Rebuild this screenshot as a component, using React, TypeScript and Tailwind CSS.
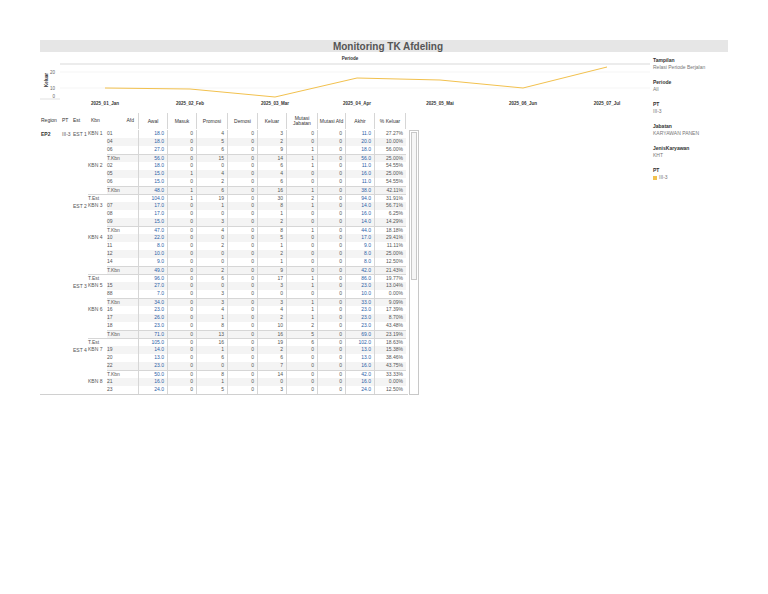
import React from "react";

type Row = { r?: string; pt?: string; est?: string; kbn?: string; afd?: string; t?: "kbn" | "est"; v: (string | number)[] };

const rows: Row[] = [
  { r: "EP2", pt: "III-3", est: "EST 1", kbn: "KBN 1", afd: "01", v: ["18.0", 0, 4, 0, 3, 0, 0, "11.0", "27.27%"] },
  { afd: "04", v: ["18.0", 0, 5, 0, 2, 0, 0, "20.0", "10.00%"] },
  { afd: "06", v: ["27.0", 0, 6, 0, 9, 1, 0, "18.0", "56.00%"] },
  { afd: "T.Kbn", t: "kbn", v: ["56.0", 0, 15, 0, 14, 1, 0, "56.0", "25.00%"] },
  { kbn: "KBN 2", afd: "02", v: ["18.0", 0, 0, 0, 6, 1, 0, "11.0", "54.55%"] },
  { afd: "05", v: ["15.0", 1, 4, 0, 4, 0, 0, "16.0", "25.00%"] },
  { afd: "06", v: ["15.0", 0, 2, 0, 6, 0, 0, "11.0", "54.55%"] },
  { afd: "T.Kbn", t: "kbn", v: ["48.0", 1, 6, 0, 16, 1, 0, "38.0", "42.11%"] },
  { kbn: "T.Est", t: "est", v: ["104.0", 1, 19, 0, 30, 2, 0, "94.0", "31.91%"] },
  { est: "EST 2", kbn: "KBN 3", afd: "07", v: ["17.0", 0, 1, 0, 8, 1, 0, "14.0", "56.71%"] },
  { afd: "08", v: ["17.0", 0, 0, 0, 1, 0, 0, "16.0", "6.25%"] },
  { afd: "09", v: ["15.0", 0, 3, 0, 2, 0, 0, "14.0", "14.29%"] },
  { afd: "T.Kbn", t: "kbn", v: ["47.0", 0, 4, 0, 8, 1, 0, "44.0", "18.18%"] },
  { kbn: "KBN 4", afd: "10", v: ["22.0", 0, 0, 0, 5, 0, 0, "17.0", "29.41%"] },
  { afd: "11", v: ["8.0", 0, 2, 0, 1, 0, 0, "9.0", "11.11%"] },
  { afd: "12", v: ["10.0", 0, 0, 0, 2, 0, 0, "8.0", "25.00%"] },
  { afd: "14", v: ["9.0", 0, 0, 0, 1, 0, 0, "8.0", "12.50%"] },
  { afd: "T.Kbn", t: "kbn", v: ["49.0", 0, 2, 0, 9, 0, 0, "42.0", "21.43%"] },
  { kbn: "T.Est", t: "est", v: ["96.0", 0, 6, 0, 17, 1, 0, "86.0", "19.77%"] },
  { est: "EST 3", kbn: "KBN 5", afd: "15", v: ["27.0", 0, 0, 0, 3, 1, 0, "23.0", "13.04%"] },
  { afd: "88", v: ["7.0", 0, 3, 0, 0, 0, 0, "10.0", "0.00%"] },
  { afd: "T.Kbn", t: "kbn", v: ["34.0", 0, 3, 0, 3, 1, 0, "33.0", "9.09%"] },
  { kbn: "KBN 6", afd: "16", v: ["23.0", 0, 4, 0, 4, 1, 0, "23.0", "17.39%"] },
  { afd: "17", v: ["26.0", 0, 1, 0, 2, 1, 0, "23.0", "8.70%"] },
  { afd: "18", v: ["23.0", 0, 8, 0, 10, 2, 0, "23.0", "43.48%"] },
  { afd: "T.Kbn", t: "kbn", v: ["71.0", 0, 13, 0, 16, 5, 0, "69.0", "23.19%"] },
  { kbn: "T.Est", t: "est", v: ["105.0", 0, 16, 0, 19, 6, 0, "102.0", "18.63%"] },
  { est: "EST 4", kbn: "KBN 7", afd: "19", v: ["14.0", 0, 1, 0, 2, 0, 0, "13.0", "15.38%"] },
  { afd: "20", v: ["13.0", 0, 6, 0, 6, 0, 0, "13.0", "38.46%"] },
  { afd: "22", v: ["23.0", 0, 0, 0, 7, 0, 0, "16.0", "43.75%"] },
  { afd: "T.Kbn", t: "kbn", v: ["50.0", 0, 8, 0, 14, 0, 0, "42.0", "33.33%"] },
  { kbn: "KBN 8", afd: "21", v: ["16.0", 0, 1, 0, 0, 0, 0, "16.0", "0.00%"] },
  { afd: "23", v: ["24.0", 0, 5, 0, 3, 0, 0, "24.0", "12.50%"] },
];

const numW = ["w-[29px]", "w-[29px]", "w-[31px]", "w-[30px]", "w-[29px]", "w-[31px]", "w-[28px]", "w-[29px]", "w-[32px]"];
const heads = ["Awal", "Masuk", "Promosi", "Demosi", "Keluar", "Mutasi\nJabatan", "Mutasi Afd", "Akhir", "% Keluar"];

const months = [
  ["2025_01_Jan", 65, 36],
  ["2025_02_Feb", 150, 37],
  ["2025_03_Mar", 235, 45],
  ["2025_04_Apr", 317, 26],
  ["2025_05_Mai", 400, 28],
  ["2025_06_Jun", 483, 36],
  ["2025_07_Jul", 567, 15],
] as const;

function Filter({ label, value, swatch }: { label: string; value: string; swatch?: boolean }) {
  return (
    <div className="mb-[8px]">
      <div className="text-[5px] leading-[7px] text-[#333] font-bold">{label}</div>
      <div className="text-[5px] leading-[7px] text-[#777] flex items-center gap-[2px]">
        {swatch && <span className="inline-block w-[4px] h-[4px] bg-[#f2c14e]" />}
        {value}
      </div>
    </div>
  );
}

export default function App() {
  return (
    <div className="w-[768px] h-[594px] bg-white relative" style={{ fontFamily: '"Liberation Sans", Arial, sans-serif' }}>
      <div className="pt-[40px] pl-[40px]">
        <div className="w-[688px] h-[12px] bg-[#e6e6e6] flex items-center justify-center">
          <span className="text-[10px] text-[#555] font-bold ml-[8px]">Monitoring TK Afdeling</span>
        </div>
        <div className="flex">
          <div className="w-[612px]">
            <svg width="612" height="58" className="block" fontFamily="Liberation Sans, Arial, sans-serif">
              <text x="310" y="8" fontSize="4.5" fontWeight="bold" fill="#333" textAnchor="middle">Periode</text>
              <line x1="20" y1="12" x2="610" y2="12" stroke="#cfcfcf" strokeWidth="0.8" />
              <line x1="20" y1="20" x2="610" y2="20" stroke="#eeeeee" strokeWidth="0.6" />
              <line x1="20" y1="36" x2="610" y2="36" stroke="#eeeeee" strokeWidth="0.6" />
              <line x1="0" y1="47" x2="20" y2="47" stroke="#cfcfcf" strokeWidth="0.6" />
              <text x="15" y="21.5" fontSize="4.5" fill="#666" textAnchor="end">20</text>
              <text x="15" y="37.5" fontSize="4.5" fill="#666" textAnchor="end">10</text>
              <text x="15" y="46" fontSize="4.5" fill="#666" textAnchor="end">0</text>
              <text x="8" y="28" fontSize="4.5" fontWeight="bold" fill="#333" textAnchor="middle" transform="rotate(-90 8 28)">Keluar</text>
              <polyline points={months.map((m) => `${m[1]},${m[2]}`).join(" ")} fill="none" stroke="#f2c14e" strokeWidth="1" />
              {months.map((m) => (
                <text key={m[0]} x={m[1]} y="53" fontSize="4.5" fontWeight="bold" fill="#333" textAnchor="middle">{m[0]}</text>
              ))}
            </svg>
            <div className="flex h-[18px] items-center text-[5px] text-[#333] mt-[2px]">
              <div className="w-[22px] pl-[1px]">Region</div>
              <div className="w-[11px]">PT</div>
              <div className="w-[15px]">Est</div>
              <div className="w-[26px] pl-[3px]">Kbn</div>
              <div className="w-[24px] text-right pr-[4px]">Afd</div>
              {heads.map((h, i) => (
                <div key={h} className={`${numW[i]} h-[16px] border-l border-[#d6d6d6] flex items-center justify-center text-center whitespace-pre-line leading-[5px] ${i === 8 ? "border-r" : ""}`}>
                  {h}
                </div>
              ))}
            </div>
            <div className="flex">
              <div className="w-[368px] border-b border-[#d0d0d0] h-[265px] overflow-hidden">
                {rows.map((row, i) => {
                  const shade = i % 2 === 1 ? "bg-[#f4f4f4]" : "";
                  return (
                    <div key={i} className="flex h-[8px] items-center text-[5px] leading-[7px] text-[#555]">
                      <div className="w-[22px] pl-[1px] font-bold text-[#333]">{row.r}</div>
                      <div className="w-[11px]">{row.pt}</div>
                      <div className="w-[15px]">{row.est}</div>
                      <div className={`w-[19px] h-[8px] ${row.t === "est" ? `border-t border-[#d6d6d6] ${shade}` : ""}`}>{row.kbn}</div>
                      <div className={`w-[31px] h-[8px] ${shade} ${row.t ? "border-t border-[#d6d6d6]" : ""}`}>{row.afd}</div>
                      {row.v.map((v, j) => (
                        <div
                          key={j}
                          className={`${numW[j]} h-[8px] text-right pr-[3px] border-l border-[#d6d6d6] ${shade} ${row.t ? "border-t" : ""} ${j === 0 || j === 7 ? "text-[#2b5ea7]" : ""}`}
                        >
                          {v}
                        </div>
                      ))}
                    </div>
                  );
                })}
              </div>
              <div className="w-[10px] h-[265px] border border-[#c8c8c8] ml-[1px] flex flex-col">
                <div className="h-[148px] mx-[1px] mt-[1px] border border-[#c8c8c8] bg-[#f6f6f6]" />
              </div>
            </div>
          </div>
          <div className="pt-[5px] pl-[1px]">
            <Filter label="Tampilan" value="Relasi Periode Berjalan" />
            <Filter label="Periode" value="All" />
            <Filter label="PT" value="III-3" />
            <Filter label="Jabatan" value="KARYAWAN PANEN" />
            <Filter label="JenisKaryawan" value="KHT" />
            <Filter label="PT" value="III-3" swatch />
          </div>
        </div>
      </div>
    </div>
  );
}
